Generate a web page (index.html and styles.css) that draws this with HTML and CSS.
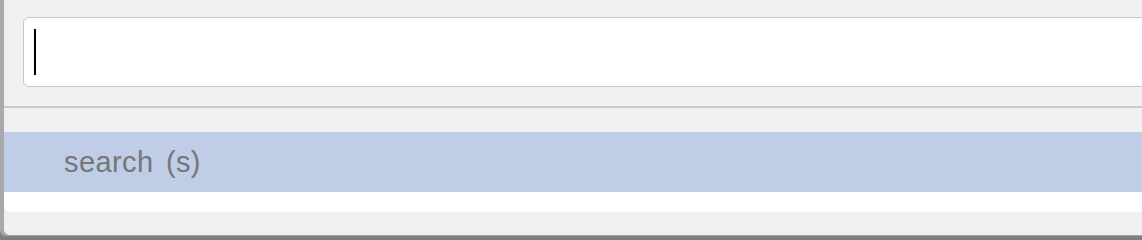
FILE: index.html
```html
<!DOCTYPE html>
<html>
<head>
<meta charset="utf-8">
<link rel="stylesheet" href="styles.css">
</head>
<body>
<div class="dialog">
  <div class="input-area">
    <div class="input"><span class="caret"></span></div>
  </div>
  <div class="divider"></div>
  <div class="list">
    <div class="item selected">search (s)</div>
    <div class="item blank"></div>
  </div>
</div>
</body>
</html>
```
FILE: styles.css
```css
html, body {
  margin: 0;
  padding: 0;
  height: 240px;
  overflow: hidden;
}
body {
  background: #7f7f7f;
  font-family: "Liberation Sans", Arial, Helvetica, sans-serif;
}
.dialog {
  margin-left: 4px;
  height: 235px;
  background: #f0f0f0;
  border-bottom: 1px solid #a4a4a4;
  border-bottom-left-radius: 6px;
  box-shadow: -4px 0 0 #a9a9a9;
  overflow: hidden;
  display: flex;
  flex-direction: column;
}
.input-area {
  padding: 17px 0 0 19px;
  height: 106px;
  box-sizing: border-box;
  flex: none;
}
.input {
  height: 70px;
  box-sizing: border-box;
  width: calc(100% + 40px);
  background: #fff;
  border: 1px solid #c6c6c6;
  border-radius: 6px;
  padding: 11px 0 0 10px;
}
.caret {
  display: block;
  width: 2px;
  height: 46px;
  background: #000;
}
.divider {
  height: 2px;
  background: #c9c9c9;
  flex: none;
}
.list {
  margin-top: 24px;
  background: #fff;
  border-bottom-left-radius: 6px;
  flex: none;
}
.item {
  height: 60px;
  box-sizing: border-box;
}
.selected {
  background: #bfcde6;
  color: #767676;
  font-size: 29px;
  letter-spacing: 0.4px;
  word-spacing: 4px;
  line-height: 60px;
  padding-left: 60px;
}
.blank {
  height: 20px;
}
```
